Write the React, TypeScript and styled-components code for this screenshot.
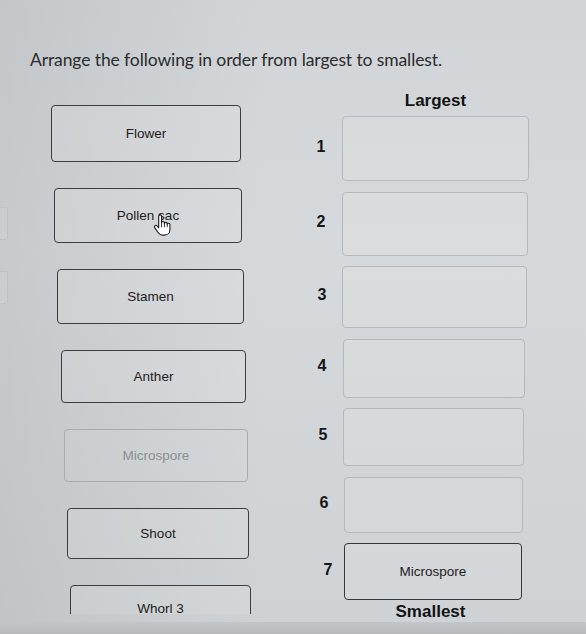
import React from "react";
import styled, { createGlobalStyle, css } from "styled-components";

const Global = createGlobalStyle`
  html, body { margin: 0; padding: 0; }
  body {
    width: 586px;
    height: 634px;
    overflow: hidden;
    font-family: "Liberation Sans", Arial, sans-serif;
  }
`;

const Screen = styled.div`
  width: 586px;
  height: 634px;
  display: flex;
  flex-direction: column;
  background:
    linear-gradient(90deg, rgba(120, 126, 130, 0.16) 0%, rgba(120, 126, 130, 0) 45%),
    linear-gradient(180deg, #d2d5d7 0%, #d6d9db 40%, #cfd2d4 100%);
  overflow: hidden;
`;

const Content = styled.div`
  flex: 0 0 622px;
  display: flex;
  flex-direction: column;
  overflow: hidden;
`;

const Title = styled.h1`
  margin: 0;
  padding: 48px 0 0 30px;
  height: 24px;
  font-family: Lato, "Open Sans", sans-serif;
  font-weight: 400;
  font-size: 17.5px;
  line-height: 24px;
  color: #2a2c2e;
  letter-spacing: -0.1px;
`;

const Board = styled.div`
  margin-top: 17px;
  display: flex;
  align-items: flex-start;
`;

const Gutter = styled.div`
  width: 8px;
  padding-top: 118px;
  display: flex;
  flex-direction: column;
  gap: 31px;
`;

const Stub = styled.div`
  height: 31px;
  margin-left: -6px;
  border: 1px solid #bfc2c4;
  border-radius: 2px;
  background: rgba(255, 255, 255, 0.08);
`;

const ChoiceList = styled.div`
  margin-left: 43px;
  width: 210px;
  height: 525px;
  padding-top: 16px;
  box-sizing: border-box;
  display: flex;
  flex-direction: column;
  gap: 26px;
  overflow: hidden;
`;

const Card = styled.div<{ $shift: number; $w: number; $h: number; $faded?: boolean }>`
  position: relative;
  flex: 0 0 auto;
  margin-left: ${(p) => p.$shift}px;
  width: ${(p) => p.$w}px;
  height: ${(p) => p.$h}px;
  box-sizing: border-box;
  border: 1.5px solid #3b3d3f;
  border-radius: 4px;
  background: rgba(255, 255, 255, 0.1);
  display: flex;
  align-items: center;
  justify-content: center;
  font-size: 13.5px;
  color: #1e2022;
  ${(p) =>
    p.$faded &&
    css`
      border-color: #a9acae;
      color: #8c8f92;
      background: rgba(255, 255, 255, 0.05);
    `}
`;

const Cursor = styled.svg`
  position: absolute;
  left: 98px;
  top: 25px;
  width: 18px;
  height: 22px;
`;

const Ranking = styled.div`
  margin-left: 51px;
  display: flex;
  flex-direction: column;
`;

const EdgeLabel = styled.div<{ $offset: number }>`
  padding-left: ${(p) => 30 + p.$offset}px;
  width: 187px;
  text-align: center;
  font-weight: 700;
  font-size: 17px;
  line-height: 24px;
  color: #111315;
`;

const Slots = styled.div`
  margin-top: 3px;
  display: flex;
  flex-direction: column;
  gap: 10.5px;
`;

const Row = styled.div`
  display: flex;
  align-items: center;
  gap: 4px;
`;

const Rank = styled.div<{ $nudge: number }>`
  width: 26px;
  text-align: center;
  font-weight: 700;
  font-size: 16px;
  color: #141618;
  transform: translate(${(p) => p.$nudge}px, -2px);
`;

const Slot = styled.div<{ $shift: number; $w: number; $h: number; $filled?: boolean }>`
  margin-left: ${(p) => p.$shift}px;
  width: ${(p) => p.$w}px;
  height: ${(p) => p.$h}px;
  box-sizing: border-box;
  border: 1px solid #b6b9bb;
  border-radius: 4px;
  background: rgba(255, 255, 255, 0.1);
  display: flex;
  align-items: center;
  justify-content: center;
  font-size: 13.5px;
  color: #1e2022;
  ${(p) =>
    p.$filled &&
    css`
      border: 1.5px solid #35373a;
    `}
`;

const BottomBand = styled.div`
  flex: 1;
  background: linear-gradient(180deg, #c3c6c8 0%, #b7bbbd 100%);
`;

const choices = [
  { label: "Flower", shift: 0, w: 190, h: 57 },
  { label: "Pollen sac", shift: 3, w: 188, h: 55, cursor: true },
  { label: "Stamen", shift: 6, w: 187, h: 55 },
  { label: "Anther", shift: 10, w: 185, h: 53 },
  { label: "Microspore", shift: 13, w: 184, h: 53, faded: true },
  { label: "Shoot", shift: 16, w: 182, h: 51 },
  { label: "Whorl 3", shift: 19, w: 181, h: 46 },
];

const slots = [
  { n: 1, shift: 0, w: 187, h: 65, nudge: -4 },
  { n: 2, shift: 0, w: 186, h: 64, nudge: -4 },
  { n: 3, shift: 0, w: 185, h: 62, nudge: -3 },
  { n: 4, shift: 1, w: 182, h: 59, nudge: -3 },
  { n: 5, shift: 1, w: 181, h: 58, nudge: -2 },
  { n: 6, shift: 2, w: 179, h: 56, nudge: -1 },
  { n: 7, shift: 2, w: 178, h: 57, nudge: 3, item: "Microspore" },
];

function HandCursor() {
  return (
    <Cursor viewBox="0 0 16 20">
      <path
        d="M5 11 V2.2 C5 1.4 5.6 0.8 6.3 0.8 C7 0.8 7.6 1.4 7.6 2.2 V8 C7.6 7.3 8.2 6.8 8.9 6.8 C9.6 6.8 10.2 7.3 10.2 8 V8.8 C10.2 8.1 10.8 7.6 11.5 7.6 C12.2 7.6 12.8 8.1 12.8 8.8 V9.6 C12.8 8.9 13.4 8.4 14 8.4 C14.7 8.4 15.2 8.9 15.2 9.6 V14 C15.2 17 13.2 19.2 10.4 19.2 H8.6 C6.8 19.2 5.6 18.4 4.6 17 L1.4 12.4 C1 11.8 1.1 11 1.7 10.6 C2.3 10.2 3.1 10.3 3.6 10.9 L5 12.6 Z"
        fill="#ffffff"
        stroke="#1a1a1a"
        strokeWidth="1"
        strokeLinejoin="round"
      />
      <path d="M7.6 8 V12 M10.2 8.8 V12 M12.8 9.6 V12" stroke="#1a1a1a" strokeWidth="0.8" />
    </Cursor>
  );
}

export default function App() {
  return (
    <>
      <Global />
      <Screen>
        <Content>
          <Title>Arrange the following in order from largest to smallest.</Title>
          <Board>
            <Gutter>
              <Stub />
              <Stub />
            </Gutter>
            <ChoiceList>
              {choices.map((c) => (
                <Card key={c.label + c.shift} $shift={c.shift} $w={c.w} $h={c.h} $faded={c.faded}>
                  {c.label}
                  {c.cursor && <HandCursor />}
                </Card>
              ))}
            </ChoiceList>
            <Ranking>
              <EdgeLabel $offset={0}>Largest</EdgeLabel>
              <Slots>
                {slots.map((s) => (
                  <Row key={s.n}>
                    <Rank $nudge={s.nudge}>{s.n}</Rank>
                    <Slot $shift={s.shift} $w={s.w} $h={s.h} $filled={!!s.item}>
                      {s.item}
                    </Slot>
                  </Row>
                ))}
              </Slots>
              <EdgeLabel $offset={-5}>Smallest</EdgeLabel>
            </Ranking>
          </Board>
        </Content>
        <BottomBand />
      </Screen>
    </>
  );
}
